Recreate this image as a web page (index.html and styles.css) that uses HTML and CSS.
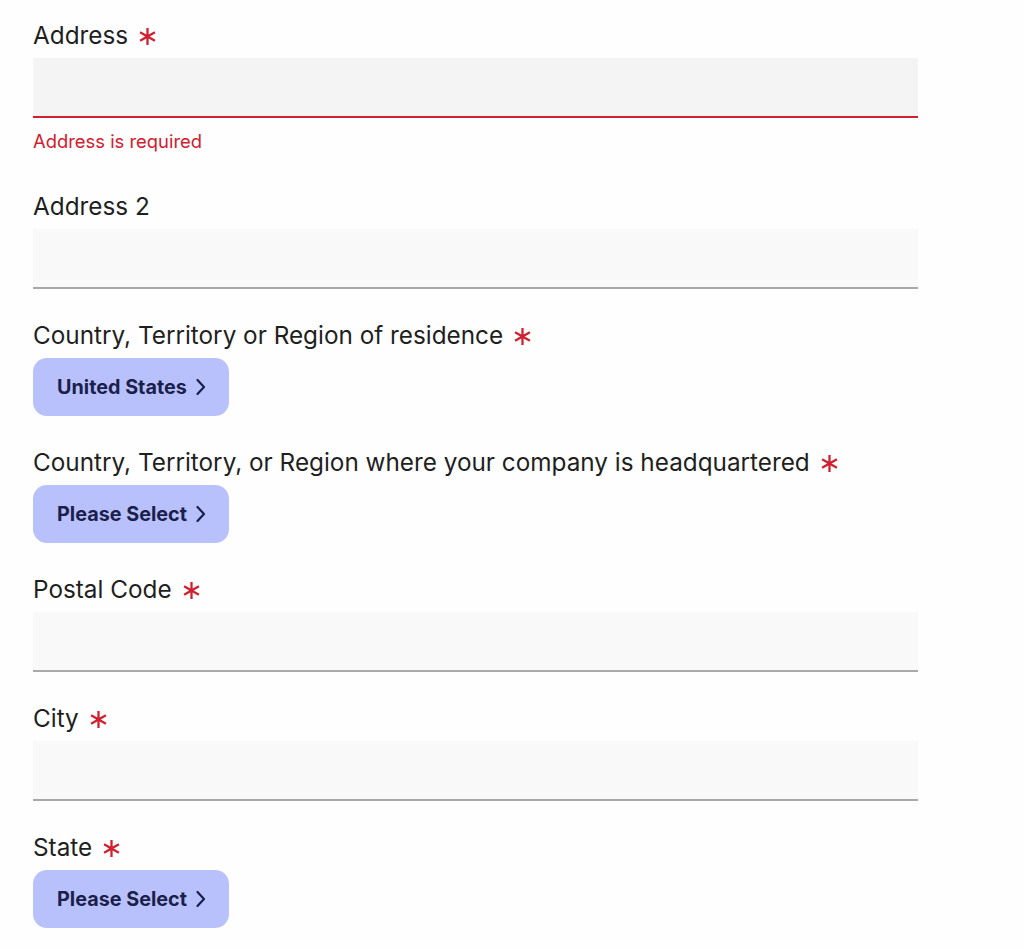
FILE: index.html
```html
<!DOCTYPE html>
<html lang="en">
<head>
<meta charset="utf-8">
<title>Address form</title>
<link rel="stylesheet" href="styles.css">
</head>
<body>
<form class="form">
  <div class="field">
    <label class="label">Address <svg class="req" viewBox="0 0 20 20" aria-hidden="true"><path d="M10 1v18M2.2 5.5 17.8 14.5M2.2 14.5 17.8 5.5"/></svg></label>
    <div class="input input-error"></div>
    <div class="error">Address is required</div>
  </div>
  <div class="field">
    <label class="label">Address 2</label>
    <div class="input"></div>
  </div>
  <div class="field">
    <label class="label">Country, Territory or Region of residence <svg class="req" viewBox="0 0 20 20" aria-hidden="true"><path d="M10 1v18M2.2 5.5 17.8 14.5M2.2 14.5 17.8 5.5"/></svg></label>
    <button type="button" class="select">United States <svg class="chev" viewBox="0 0 11 18" aria-hidden="true"><path d="M2.5 2l6.5 7-6.5 7"/></svg></button>
  </div>
  <div class="field">
    <label class="label">Country, Territory, or Region where your company is headquartered <svg class="req" viewBox="0 0 20 20" aria-hidden="true"><path d="M10 1v18M2.2 5.5 17.8 14.5M2.2 14.5 17.8 5.5"/></svg></label>
    <button type="button" class="select">Please Select <svg class="chev" viewBox="0 0 11 18" aria-hidden="true"><path d="M2.5 2l6.5 7-6.5 7"/></svg></button>
  </div>
  <div class="field">
    <label class="label">Postal Code <svg class="req" viewBox="0 0 20 20" aria-hidden="true"><path d="M10 1v18M2.2 5.5 17.8 14.5M2.2 14.5 17.8 5.5"/></svg></label>
    <div class="input"></div>
  </div>
  <div class="field">
    <label class="label">City <svg class="req" viewBox="0 0 20 20" aria-hidden="true"><path d="M10 1v18M2.2 5.5 17.8 14.5M2.2 14.5 17.8 5.5"/></svg></label>
    <div class="input"></div>
  </div>
  <div class="field">
    <label class="label">State <svg class="req" viewBox="0 0 20 20" aria-hidden="true"><path d="M10 1v18M2.2 5.5 17.8 14.5M2.2 14.5 17.8 5.5"/></svg></label>
    <button type="button" class="select">Please Select <svg class="chev" viewBox="0 0 11 18" aria-hidden="true"><path d="M2.5 2l6.5 7-6.5 7"/></svg></button>
  </div>
</form>
</body>
</html>
```
FILE: styles.css
```css
html, body {
  margin: 0;
  background: #fefefe;
}
body {
  font-family: Inter, "Noto Sans", "Liberation Sans", sans-serif;
  color: #1f1f1f;
}
.form {
  width: 885px;
  margin-left: 33px;
  padding-top: 20px;
  display: flex;
  flex-direction: column;
  gap: 31px;
}
.field {
  display: flex;
  flex-direction: column;
  align-items: flex-start;
}
.label {
  display: flex;
  align-items: center;
  gap: 10px;
  font-size: 24.3px;
  line-height: 30px;
  margin-bottom: 8px;
}
.req {
  width: 19px;
  height: 19px;
  margin-top: 2px;
  fill: none;
  stroke: #d0202f;
  stroke-width: 2.4;
  stroke-linecap: butt;
}
.input {
  align-self: stretch;
  height: 58px;
  background: #f9f9f9;
  border-bottom: 2px solid #a9a9a9;
}
.input-error {
  background: #f4f4f4;
  border-bottom-color: #d0202f;
}
.error {
  margin-top: 11px;
  margin-bottom: 7px;
  font-size: 18.4px;
  line-height: 24px;
  color: #d0202f;
}
.select {
  display: flex;
  align-items: center;
  gap: 8px;
  height: 58px;
  padding: 0 23px 0 24px;
  border: 0;
  border-radius: 14px;
  background: #b9c1fc;
  color: #1b1f4b;
  font-family: Inter, "Noto Sans", "Liberation Sans", sans-serif;
  font-size: 19.8px;
  font-weight: 700;
  cursor: pointer;
}
.chev {
  width: 11px;
  height: 18px;
  fill: none;
  stroke: #1b1f4b;
  stroke-width: 2.2;
  stroke-linecap: round;
  stroke-linejoin: round;
}
```
